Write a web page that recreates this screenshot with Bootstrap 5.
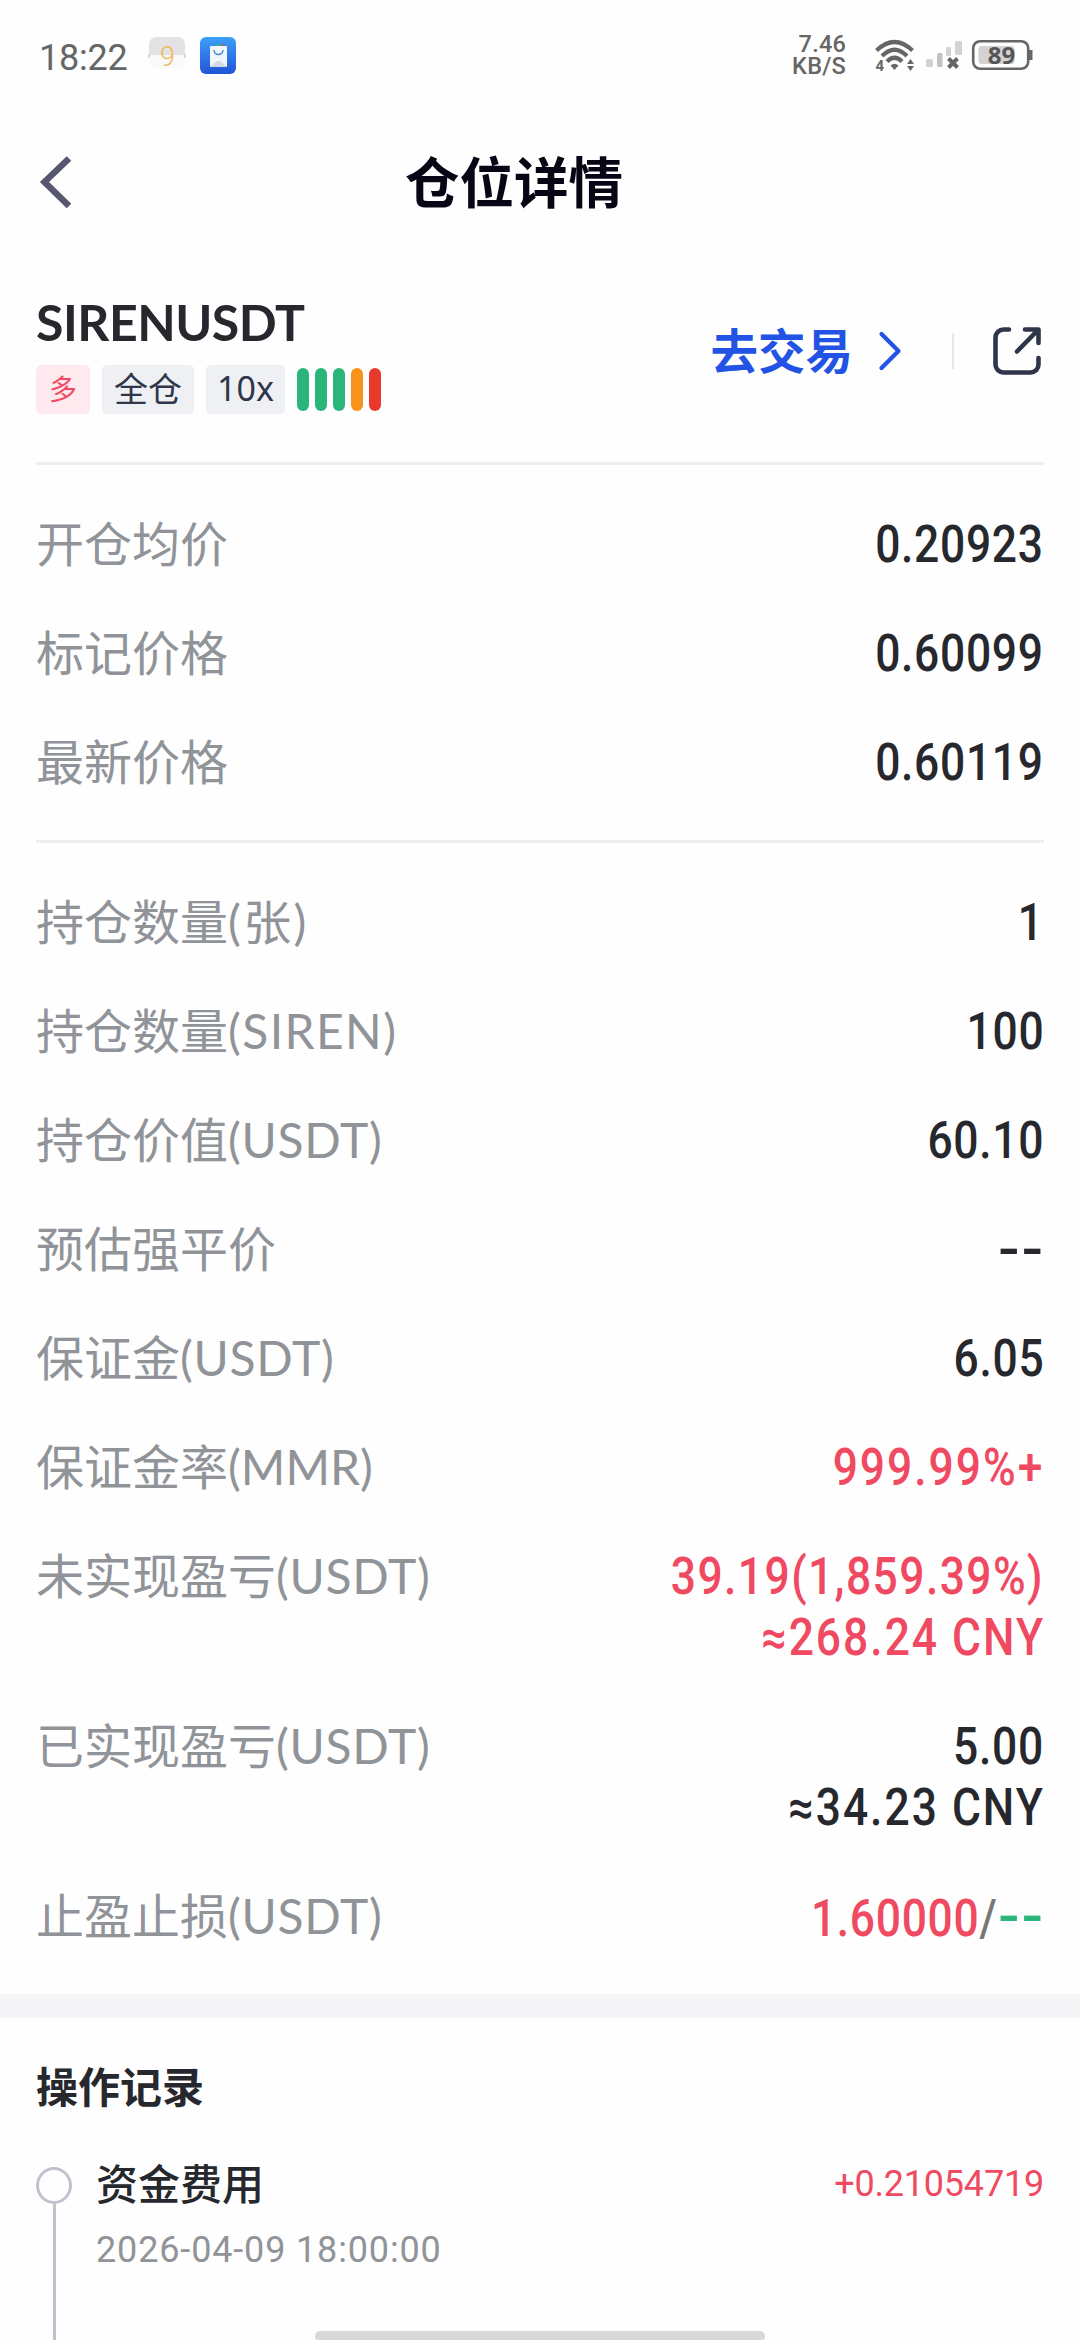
<!DOCTYPE html>
<html lang="zh-CN">
<head>
<meta charset="utf-8">
<meta name="viewport" content="width=device-width, initial-scale=1">
<title>仓位详情</title>
<link href="https://cdn.jsdelivr.net/npm/bootstrap@5.3.0/dist/css/bootstrap.min.css" rel="stylesheet">
<style>
body{font-family:Lato,"Noto Sans CJK SC",sans-serif;background:#fefefe;color:#26282d;overflow:hidden}
.screen{width:1080px;height:2340px;overflow:hidden}
svg{display:block;flex:none;overflow:visible}
.statusbar{height:110px;padding:0 44px 0 39px;font-family:Roboto,sans-serif;color:#666}
.clock{font-size:36px;line-height:40px;padding-top:38px;width:110px;letter-spacing:-.2px}
.app-icons{gap:15px;padding-top:37px}
.netspeed{font-size:23.5px;line-height:22px;font-weight:500;padding-top:33px;text-align:right;letter-spacing:.2px}
.status-icons{margin-top:39px}
.titlebar{height:144px;padding:0 36px}
.page-title{font-size:54.5px;line-height:64px;font-weight:700;color:#060614;margin-left:333px}
.px-page{padding-left:36px;padding-right:36px}
.pair-head{height:208px;padding-top:38px}
.symbol{font-size:50px;line-height:60px;font-weight:700;letter-spacing:-.5px}
.tags{gap:12px;margin-top:13px}
.tag{height:49px;border-radius:5px;font-size:34px;line-height:46px;background:#eef0f4;color:#2f364a;font-family:"Noto Sans","Noto Sans CJK SC",sans-serif;text-align:center}
.tag-cjk{font-family:"Noto Sans CJK SC",sans-serif}
.tag-long{background:#feeaee;color:#ee4c65;font-size:28px;width:54px}
.tag-mode{width:92px}
.tag-lever{width:79px}
.risk{gap:6px}
.risk i{width:12px;height:43px;border-radius:6px;background:#2ab67b}
.risk .risk-warn{background:#f7931a}
.risk .risk-high{background:#e8392c}
.head-actions{padding-top:29px;padding-right:3px}
.trade{font-size:47.5px;line-height:60px;font-weight:700;color:#2253e4;margin-right:26px}
.vline{width:2px;height:36px;background:#e7e8ea;margin:0 39px 0 51px}
.group{border-top:3px solid #eeeeef;padding:48px 0;gap:48px}
.item{font-size:48px;line-height:61px}
.item-label{color:#909398}
.ls-unit{letter-spacing:2.3px}.ls-coin{letter-spacing:1.4px}.ls-usdt{letter-spacing:.7px}
.num{display:block;font-family:Roboto,sans-serif;font-weight:500;font-size:51px;line-height:61px;letter-spacing:.8px;transform:scaleX(.87);transform-origin:right center;white-space:nowrap;padding-top:1px;height:61px}
.num-pct{letter-spacing:2.3px}.num-pnl{letter-spacing:1.65px}.num-cny{letter-spacing:2.3px;margin-right:-1px}
.red{color:#ef4a62}.green{color:#2ab67b}.sep{color:#777}
.dash{display:inline-block;font-family:Lato,sans-serif;font-weight:700;letter-spacing:0;transform:scaleX(1.42);transform-origin:right center;position:relative;top:-2px}
.dash-sep{margin-left:16px}
.band{height:24px;background:#f5f5f7}
.sec-title{font-size:42px;line-height:60px;font-weight:700;padding-top:39px}
.log{padding-top:37px}
.rail{width:36px;margin-right:24px;padding-top:13px}
.knob{width:36px;height:37px;border:3px solid #bfc2cc;border-radius:50%}
.stem{width:3px;height:150px;background:#bfc2cc}
.log-name{font-size:42px;line-height:60px;font-weight:500}
.log-num{font-family:Roboto,sans-serif;font-size:36px;line-height:44px;white-space:nowrap;letter-spacing:-.2px}
.log-time{color:#909398;margin-top:14px;letter-spacing:.85px}
.homebar{left:315px;bottom:0;width:450px;height:9px;border-radius:5px 5px 3px 3px;background:#d8d8d8}
</style>
<script src="https://cdn.jsdelivr.net/npm/bootstrap@5.3.0/dist/js/bootstrap.bundle.min.js"></script>
</head>
<body>
<div class="screen position-relative">
  <header class="statusbar d-flex align-items-start">
    <div class="clock">18:22</div>
    <div class="app-icons d-flex">
      <svg width="36" height="36" viewBox="0 0 36 36"><path d="M0 18V7a7 7 0 0 1 7-7h22a7 7 0 0 1 7 7v11z" fill="#e3e3e3"/><path d="M0 18h36v6a7 7 0 0 1-7 7H7a7 7 0 0 1-7-7z" fill="#f9f9f9"/><path d="M0 17v4M36 17v4" stroke="#bbb"/><text x="18.500" y="29" text-anchor="middle" font-family="Roboto" font-weight="300" font-size="27" fill="#eeb95a">9</text></svg>
      <svg width="36" height="37" viewBox="0 0 36 37"><defs><linearGradient id="g" x2="0" y2="1"><stop stop-color="#3ba0f8"/><stop offset="1" stop-color="#2254d8"/></linearGradient></defs><rect width="36" height="37" rx="6" fill="url(#g)"/><path d="M14 9l4-2 2 2z" fill="#22b8a8"/><path d="M18 9l3-3 2 3z" fill="#4caf50"/><path d="M22 9v-2l4 2z" fill="#a04be0"/><rect x="10" y="9" width="17" height="21" rx="1" fill="#f2f5fa"/><path d="M10 30l7-6h3l7 6z" fill="#d3dae6"/><path d="M14 13c0 6 9 6 9 0" fill="none" stroke="#3a86d8" stroke-width="1.400"/></svg>
    </div>
    <div class="netspeed ms-auto"><div>7.46</div><div>KB/S</div></div>
    <svg class="status-icons ms-4" width="166" height="36" viewBox="870 39 166 36">
      <g fill="none" stroke="#666" stroke-width="4.200"><path d="M876.500 50.500Q894.500 33.500 912.500 50.500"/><path d="M882 56Q894.500 43.500 907 56"/><path d="M887 61.500Q894.500 54 902 61.500"/></g>
      <path d="M890.500 65.500q4-3.500 8 0l-4 4.500z" fill="#666"/>
      <text x="875.500" y="70.500" font-family="Roboto" font-weight="700" font-size="15" fill="#666">4</text>
      <path d="M907 64l3.500-5 3.500 5zM907 66l3.500 5 3.500-5z" fill="#666"/>
      <g fill="#d2d2d2"><rect x="926" y="59" width="7" height="8" rx="1.500"/><rect x="937" y="53" width="5.500" height="14" rx="1.500" fill="#c2c2c2"/><rect x="946" y="47" width="5" height="9" rx="1.500"/><rect x="955" y="41" width="7" height="14" rx="1.500"/></g>
      <path d="M948.500 58.500l9 9M957.500 58.500l-9 9" stroke="#666" stroke-width="4"/>
      <rect x="973.200" y="41.200" width="55" height="27.600" rx="7" fill="none" stroke="#666" stroke-width="2.600"/>
      <rect x="978.500" y="46" width="36" height="18" rx="3" fill="#d2d2d2"/><rect x="1029" y="50" width="3.500" height="10" fill="#666"/>
      <text x="1001.500" y="64" text-anchor="middle" font-family="Noto Sans" font-weight="700" font-size="24" fill="#555">89</text>
    </svg>
  </header>

  <nav class="titlebar d-flex align-items-center">
    <svg width="36" height="56" viewBox="36 155 36 56"><path d="M69 159.500L44.500 183 69 207" fill="none" stroke="#57586f" stroke-width="6.500"/></svg>
    <h1 class="page-title mb-0">仓位详情</h1>
  </nav>

  <main>
    <section class="px-page">
      <div class="pair-head d-flex align-items-start">
        <div>
          <div class="symbol">SIRENUSDT</div>
          <div class="tags d-flex align-items-center">
            <span class="tag tag-cjk tag-long">多</span>
            <span class="tag tag-cjk tag-mode">全仓</span>
            <span class="tag tag-lever">10x</span>
            <span class="risk d-flex"><i></i><i></i><i></i><i class="risk-warn"></i><i class="risk-high"></i></span>
          </div>
        </div>
        <div class="head-actions d-flex align-items-center ms-auto">
          <span class="trade">去交易</span>
          <svg width="22" height="40" viewBox="0 0 22 40"><path d="M2.500 3L19.500 20 2.500 37" fill="none" stroke="#2253e4" stroke-width="4.200" stroke-linecap="round" stroke-linejoin="round"/></svg>
          <span class="vline"></span>
          <svg width="48" height="48" viewBox="0 0 48 48"><g fill="none" stroke="#2f364a" stroke-width="4.600" stroke-linecap="round" stroke-linejoin="round"><path d="M16 2.500H10.500a8 8 0 0 0-8 8v27a8 8 0 0 0 8 8h27a8 8 0 0 0 8-8V31"/><path d="M32 2.500h13.500V16M45 3L24 24.500"/></g></svg>
        </div>
      </div>

      <div class="group d-flex flex-column">
        <div class="item d-flex justify-content-between"><span class="item-label">开仓均价</span><span class="num">0.20923</span></div>
        <div class="item d-flex justify-content-between"><span class="item-label">标记价格</span><span class="num">0.60099</span></div>
        <div class="item d-flex justify-content-between"><span class="item-label">最新价格</span><span class="num">0.60119</span></div>
      </div>

      <div class="group d-flex flex-column">
        <div class="item d-flex justify-content-between"><span class="item-label">持仓数量<span class="ls-unit">(张)</span></span><span class="num">1</span></div>
        <div class="item d-flex justify-content-between"><span class="item-label">持仓数量<span class="ls-coin">(SIREN)</span></span><span class="num">100</span></div>
        <div class="item d-flex justify-content-between"><span class="item-label">持仓价值<span class="ls-usdt">(USDT)</span></span><span class="num">60.10</span></div>
        <div class="item d-flex justify-content-between"><span class="item-label">预估强平价</span><span class="num"><span class="dash">--</span></span></div>
        <div class="item d-flex justify-content-between"><span class="item-label">保证金<span class="ls-usdt">(USDT)</span></span><span class="num">6.05</span></div>
        <div class="item d-flex justify-content-between"><span class="item-label">保证金率(MMR)</span><span class="num num-pct red">999.99%+</span></div>
        <div class="item d-flex justify-content-between"><span class="item-label">未实现盈亏<span class="ls-usdt">(USDT)</span></span><div class="red text-end"><span class="num num-pnl">39.19(1,859.39%)</span><span class="num num-cny">≈268.24 CNY</span></div></div>
        <div class="item d-flex justify-content-between"><span class="item-label">已实现盈亏<span class="ls-usdt">(USDT)</span></span><div class="text-end"><span class="num">5.00</span><span class="num num-cny">≈34.23 CNY</span></div></div>
        <div class="item d-flex justify-content-between"><span class="item-label">止盈止损<span class="ls-usdt">(USDT)</span></span><span class="num"><span class="red">1.60000</span><span class="sep">/</span><span class="dash dash-sep green">--</span></span></div>
      </div>
    </section>

    <div class="band"></div>

    <section class="px-page">
      <h2 class="sec-title mb-0">操作记录</h2>
      <div class="log d-flex">
        <div class="rail d-flex flex-column align-items-center"><span class="knob"></span><span class="stem"></span></div>
        <div class="flex-grow-1">
          <div class="d-flex justify-content-between align-items-center">
            <span class="log-name">资金费用</span><span class="log-num red">+0.21054719</span>
          </div>
          <div class="log-num log-time">2026-04-09 18:00:00</div>
        </div>
      </div>
    </section>
  </main>
  <div class="homebar position-absolute"></div>
</div>
</body>
</html>
